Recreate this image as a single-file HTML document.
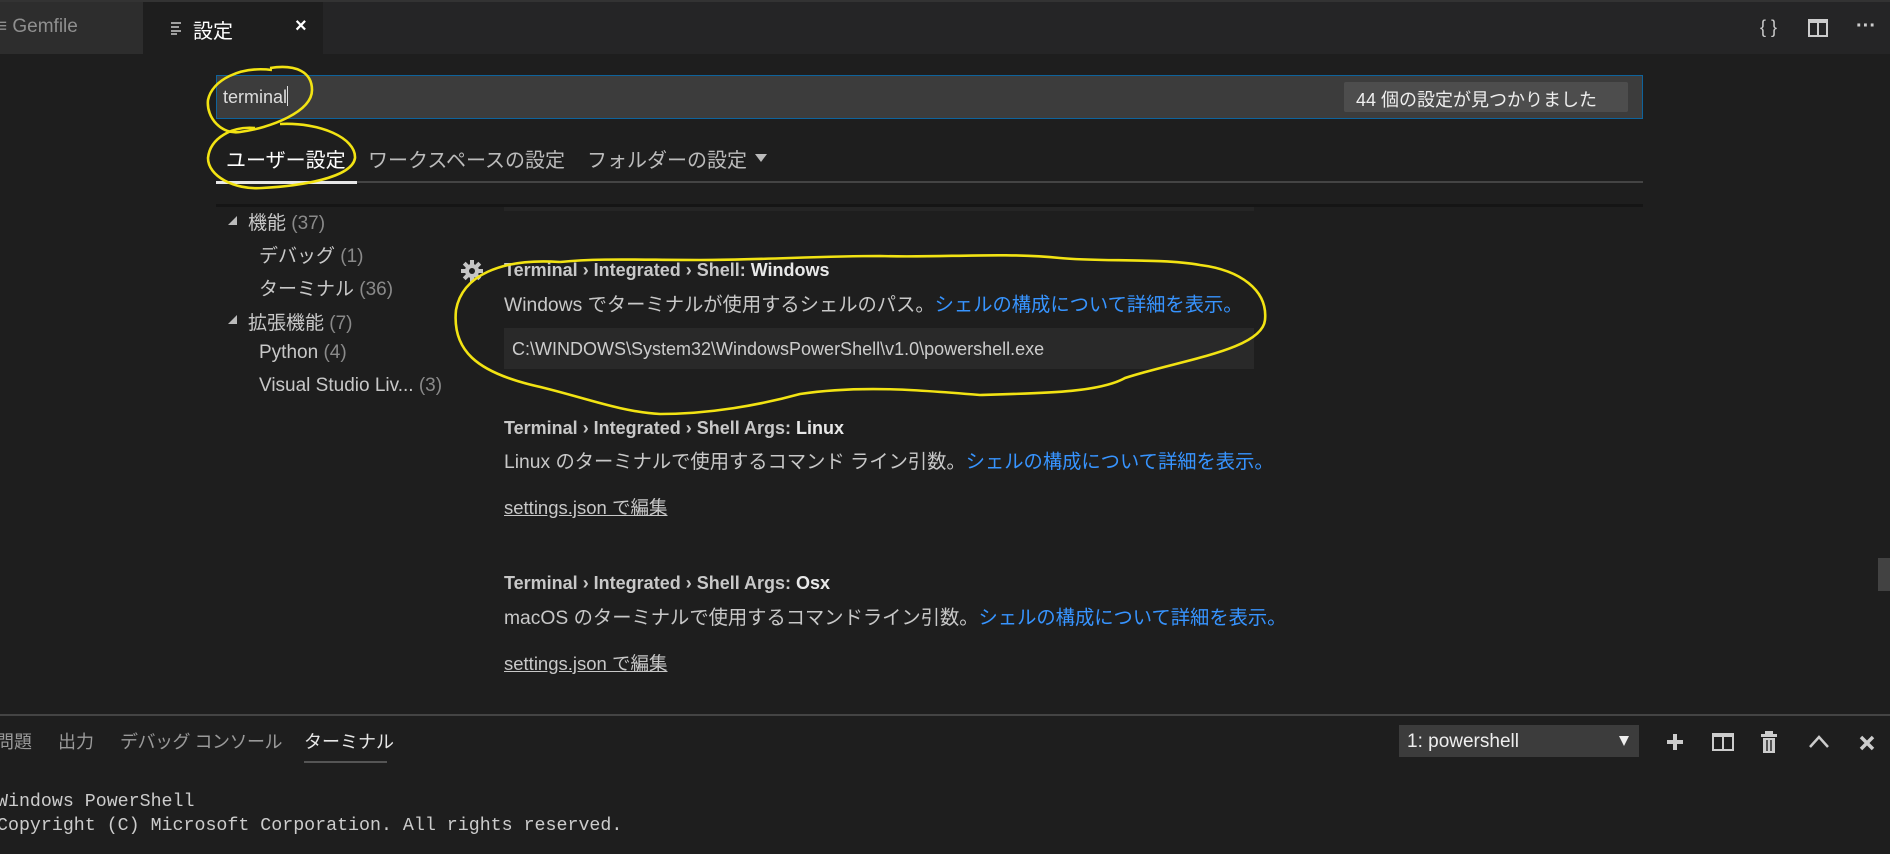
<!DOCTYPE html>
<html><head><meta charset="utf-8">
<style>
*{margin:0;padding:0;box-sizing:border-box}
body{width:1890px;height:854px;background:#1e1e1e;position:relative;overflow:hidden;font-family:"Liberation Sans","Noto Sans CJK JP",sans-serif;color:#ccc}
.a{position:absolute;white-space:nowrap}
.lnk{color:#3794ff}
.t{font-size:18px;font-weight:bold;color:#c8c8c8}
.t b{color:#e8e8e8}
.d{font-size:19.3px;color:#c8c8c8}
.u{font-size:18.5px;color:#c8c8c8;text-decoration:underline}
.toc{font-size:19px;color:#c8c8c8}
.toc span{color:#8a8a8a}
</style></head><body>
<!-- tab bar -->
<div class="a" style="left:0;top:0;width:1890px;height:54px;background:#252526;border-top:2px solid #333"></div>
<div class="a" style="left:0;top:2px;width:143px;height:52px;background:#2d2d2d"></div>
<div class="a" style="left:-4px;top:16px;font-size:19px;color:#8f8f8f">≡ Gemfile</div>
<div class="a" style="left:143px;top:2px;width:180px;height:52px;background:#1e1e1e"></div>
<svg class="a" style="left:171px;top:21px" width="14" height="14"><path d="M0 2h10M0 6h8M0 10h10M0 13h6" stroke="#ccc" stroke-width="1.6"/></svg>
<div class="a" style="left:193px;top:15px;font-size:20px;color:#fff">設定</div>
<div class="a" style="left:295px;top:15px;font-size:20px;color:#fff;font-weight:bold">×</div>
<div class="a" style="left:1760px;top:17px;font-size:18px;color:#ccc">{ }</div>
<svg class="a" style="left:1808px;top:19px" width="20" height="18"><rect x="1" y="1" width="18" height="16" fill="none" stroke="#ccc" stroke-width="2"/><rect x="1" y="1" width="18" height="3" fill="#ccc"/><path d="M10 1v16" stroke="#ccc" stroke-width="2"/></svg>
<div class="a" style="left:1856px;top:15px;font-size:20px;color:#ccc;font-weight:bold">···</div>

<!-- search -->
<div class="a" style="left:216px;top:75px;width:1427px;height:44px;background:#3c3c3c;border:1px solid #0e639c"></div>
<div class="a" style="left:223px;top:86px;font-size:18px;color:#ddd">terminal<span style="display:inline-block;width:1px;height:20px;background:#ddd;vertical-align:-3px"></span></div>
<div class="a" style="left:1344px;top:82px;width:284px;height:30px;background:#4d4d4d;border-radius:2px"></div>
<div class="a" style="left:1356px;top:86px;font-size:18px;color:#eee">44 個の設定が見つかりました</div>

<!-- scope tabs -->
<div class="a" style="left:216px;top:181px;width:1427px;height:2px;background:#444"></div>
<div class="a" style="left:216px;top:181px;width:141px;height:3px;background:#e7e7e7"></div>
<div class="a" style="left:226px;top:144px;font-size:20px;color:#fff">ユーザー設定</div>
<div class="a" style="left:368px;top:144px;font-size:20px;color:#bbb">ワークスペースの設定</div>
<div class="a" style="left:587px;top:144px;font-size:20px;color:#bbb">フォルダーの設定</div>
<svg class="a" style="left:755px;top:154px" width="12" height="8"><path d="M0 0h12L6 8z" fill="#bbb"/></svg>
<div class="a" style="left:216px;top:204px;width:1427px;height:3px;background:#151515"></div>
<div class="a" style="left:504px;top:207px;width:750px;height:4px;background:#252525"></div>

<!-- toc -->
<svg class="a" style="left:228px;top:216px" width="10" height="10"><path d="M9 0v9H0z" fill="#bbb"/></svg>
<div class="a toc" style="left:248px;top:208px">機能 <span>(37)</span></div>
<div class="a toc" style="left:259px;top:241px">デバッグ <span>(1)</span></div>
<div class="a toc" style="left:259px;top:274px">ターミナル <span>(36)</span></div>
<svg class="a" style="left:228px;top:315px" width="10" height="10"><path d="M9 0v9H0z" fill="#bbb"/></svg>
<div class="a toc" style="left:248px;top:308px">拡張機能 <span>(7)</span></div>
<div class="a toc" style="left:259px;top:342px">Python <span>(4)</span></div>
<div class="a toc" style="left:259px;top:375px">Visual Studio Liv... <span>(3)</span></div>

<!-- settings -->
<svg class="a" style="left:461px;top:260px" width="22" height="22" viewBox="0 0 22 22"><g fill="#c5c5c5"><circle cx="11" cy="11" r="7"/><rect x="9" y="0" width="4" height="22"/><rect x="0" y="9" width="22" height="4"/><rect x="9" y="0" width="4" height="22" transform="rotate(45 11 11)"/><rect x="9" y="0" width="4" height="22" transform="rotate(-45 11 11)"/></g><circle cx="11" cy="11" r="3" fill="#1e1e1e"/></svg>
<div class="a t" style="left:504px;top:260px">Terminal › Integrated › Shell: <b>Windows</b></div>
<div class="a d" style="left:504px;top:289px">Windows でターミナルが使用するシェルのパス。<span class="lnk">シェルの構成について詳細を表示。</span></div>
<div class="a" style="left:504px;top:328px;width:750px;height:41px;background:#292929"></div>
<div class="a" style="left:512px;top:339px;font-size:18px;color:#ccc">C:\WINDOWS\System32\WindowsPowerShell\v1.0\powershell.exe</div>

<div class="a t" style="left:504px;top:418px">Terminal › Integrated › Shell Args: <b>Linux</b></div>
<div class="a d" style="left:504px;top:446px">Linux のターミナルで使用するコマンド ライン引数。<span class="lnk">シェルの構成について詳細を表示。</span></div>
<div class="a u" style="left:504px;top:494px">settings.json で編集</div>

<div class="a t" style="left:504px;top:573px">Terminal › Integrated › Shell Args: <b>Osx</b></div>
<div class="a d" style="left:504px;top:602px">macOS のターミナルで使用するコマンドライン引数。<span class="lnk">シェルの構成について詳細を表示。</span></div>
<div class="a u" style="left:504px;top:650px">settings.json で編集</div>

<div class="a" style="left:1878px;top:558px;width:12px;height:33px;background:#424242"></div>

<!-- panel -->
<div class="a" style="left:0;top:714px;width:1890px;height:2px;background:#444"></div>
<div class="a" style="left:-4px;top:728px;font-size:18px;color:#9a9a9a">問題</div>
<div class="a" style="left:58px;top:728px;font-size:18px;color:#9a9a9a">出力</div>
<div class="a" style="left:120px;top:728px;font-size:18px;color:#9a9a9a;letter-spacing:-0.5px">デバッグ コンソール</div>
<div class="a" style="left:304px;top:728px;font-size:18px;color:#e7e7e7">ターミナル</div>
<div class="a" style="left:304px;top:761px;width:83px;height:2px;background:#555"></div>
<div class="a" style="left:1399px;top:725px;width:240px;height:32px;background:#3c3c3c"></div>
<div class="a" style="left:1407px;top:731px;font-size:19px;color:#eee">1: powershell</div>
<svg class="a" style="left:1619px;top:736px" width="10" height="10"><path d="M0 0h10L5 10z" fill="#eee"/></svg>
<svg class="a" style="left:1666px;top:733px" width="18" height="18"><path d="M9 1v16M1 9h16" stroke="#ccc" stroke-width="4"/></svg>
<svg class="a" style="left:1712px;top:733px" width="22" height="18"><rect x="1" y="1" width="20" height="16" fill="none" stroke="#ccc" stroke-width="2"/><rect x="1" y="1" width="20" height="3" fill="#ccc"/><path d="M11 1v16" stroke="#ccc" stroke-width="2"/></svg>
<svg class="a" style="left:1761px;top:731px" width="16" height="22"><rect x="4" y="0" width="8" height="3" fill="#ccc"/><rect x="0" y="3" width="16" height="3" fill="#ccc"/><rect x="2" y="7" width="12" height="15" fill="#ccc"/><path d="M6 9v11M10 9v11" stroke="#1e1e1e" stroke-width="1.4"/></svg>
<svg class="a" style="left:1808px;top:734px" width="22" height="14"><path d="M2 13L11 3l9 10" fill="none" stroke="#ccc" stroke-width="2.5"/></svg>
<svg class="a" style="left:1859px;top:735px" width="16" height="16"><path d="M2 2l12 12M14 2L2 14" stroke="#ccc" stroke-width="3.5"/></svg>

<div class="a" style="left:-3px;top:790px;font-family:'Liberation Mono',monospace;font-size:18.3px;color:#ccc;line-height:24px">Windows PowerShell<br>Copyright (C) Microsoft Corporation. All rights reserved.</div>

<!-- yellow annotations -->
<svg class="a" style="left:0;top:0" width="1890" height="854" fill="none" stroke="#f2e313" stroke-width="2.6">
<path d="M272 70C240 66 212 80 208 100C206 118 222 135 240 132C270 128 312 112 312 90C312 72 296 64 270 68"/>
<path d="M255 128C232 126 210 138 208 158C208 176 234 190 262 188C300 186 352 178 355 158C356 138 320 122 280 124"/>
<path d="M560 262C500 258 462 276 456 310C452 350 476 372 536 386C580 396 620 412 660 414C710 414 760 405 800 394C860 385 920 390 980 395C1050 393 1100 392 1125 378C1180 360 1262 350 1265 320C1268 290 1240 270 1200 265C1160 258 1100 262 1060 258C1000 252 940 258 880 256C820 256 760 260 700 260C640 260 600 258 560 262"/>
</svg>
</body></html>
